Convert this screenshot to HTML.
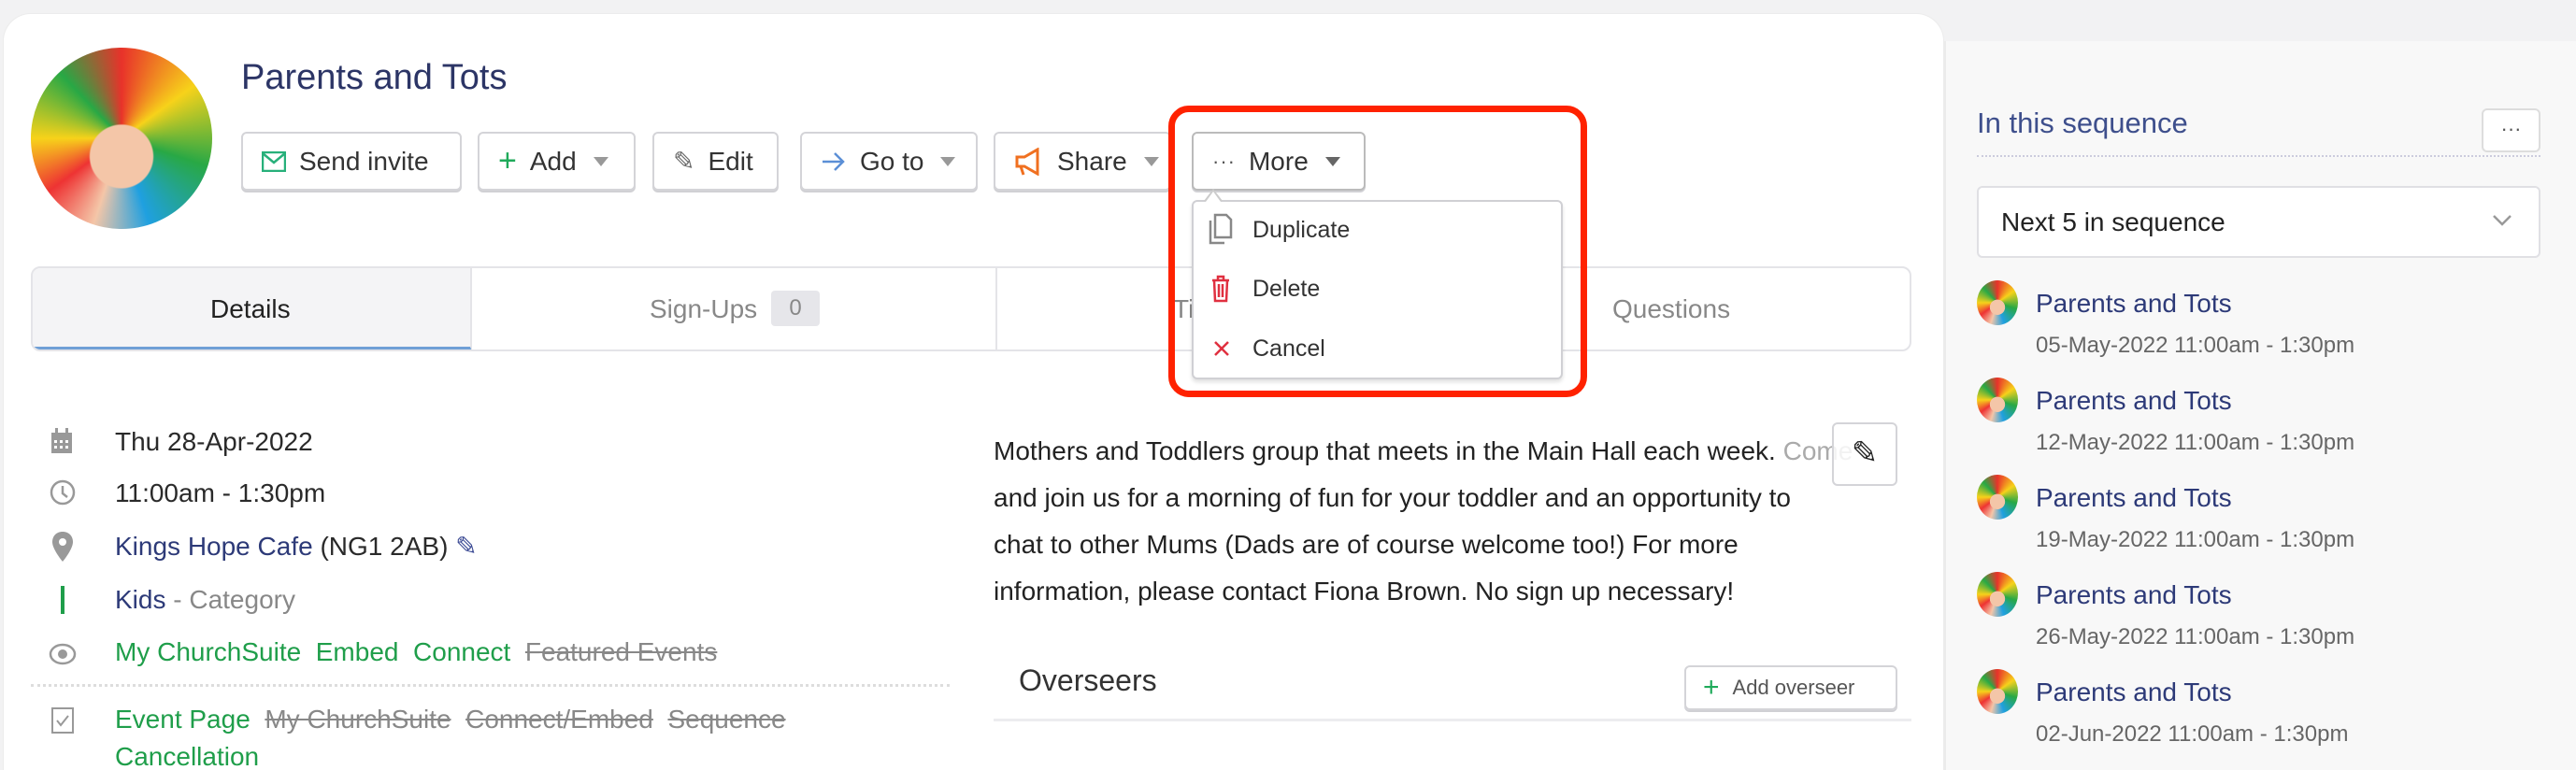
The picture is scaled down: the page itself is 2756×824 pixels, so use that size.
<!DOCTYPE html>
<html style="width:2756px;height:824px;overflow:hidden"><head><meta charset="utf-8"><style>
*{box-sizing:border-box;margin:0;padding:0}
body{width:2756px;height:824px;overflow:hidden;background:#f2f2f3;font-family:"Liberation Sans",sans-serif;color:#2a2a2a;position:relative}
.abs{position:absolute}
.card{left:3px;top:14px;width:2077px;height:810px;background:#fff;border-radius:30px 30px 0 0;border:1px solid #ececec;border-bottom:none}
.side{left:2080px;top:44px;width:676px;height:780px;background:#f8f8f8;border-left:2px solid #ebebeb}
.av{border-radius:50%;background:
radial-gradient(circle at 50% 60%,#f4c6a8 0 22%,transparent 23%),
conic-gradient(from 0deg,#e8322a,#f7d21a 15%,#28a845 30%,#1fa0e0 45%,#f4c6a8 55%,#e33 65%,#f7d21a 75%,#28a845 88%,#e8322a)}
.btn{top:141px;height:63px;border:2px solid #d4d4d8;border-radius:6px;background:#fff;font-size:28px;color:#333;display:flex;align-items:center;padding-left:20px;gap:14px;box-shadow:0 2px 0 #d0d0d4}
.caret{width:0;height:0;border-left:8px solid transparent;border-right:8px solid transparent;border-top:10px solid #999;margin-left:4px}
.t28{font-size:28px}
.gray{color:#888}
.green{color:#1f9e4a}
.strike{color:#888;text-decoration:line-through}
.navy{color:#2d3a78}
.mi{font-size:25px;color:#333;left:1340px}
</style></head><body>
<div class="abs card"></div>
<div class="abs side"></div>

<div class="abs av" style="left:33px;top:51px;width:194px;height:194px"></div>
<div class="abs" style="left:258px;top:62px;font-size:38px;color:#2c3566">Parents and Tots</div>

<div class="abs btn" style="left:258px;width:236px"><svg width="26" height="22" viewBox="0 0 26 22"><rect x="1" y="1" width="24" height="20" fill="none" stroke="#27b07a" stroke-width="2.5"/><path d="M1 2l12 10 12-10" fill="none" stroke="#27b07a" stroke-width="2.5"/></svg>Send invite</div>
<div class="abs btn" style="left:511px;width:169px"><span style="color:#1faa5a;font-size:34px">+</span>Add<span class="caret"></span></div>
<div class="abs btn" style="left:698px;width:135px"><span style="color:#666;font-size:28px">✎</span>Edit</div>
<div class="abs btn" style="left:856px;width:190px"><svg width="28" height="24" viewBox="0 0 28 24"><path d="M2 12h22 M15 3l9 9-9 9" fill="none" stroke="#5b8fd6" stroke-width="2.5"/></svg>Go to<span class="caret"></span></div>
<div class="abs btn" style="left:1063px;width:190px"><svg width="32" height="30" viewBox="0 0 32 30"><path d="M3 10h8l14-8v26l-14-8H3z M7 20l3 9" fill="none" stroke="#f07020" stroke-width="3"/></svg>Share<span class="caret"></span></div>
<div class="abs btn" style="left:1275px;width:186px;border-color:#bbb"><span style="color:#555;font-size:22px;letter-spacing:1px">···</span>More<span class="caret" style="border-top-color:#666"></span></div>

<!-- tabs -->
<div class="abs" style="left:33px;top:285px;width:2012px;height:91px;border:2px solid #e4e4e8;border-radius:10px;overflow:hidden;background:#fff">
 <div class="abs" style="left:0;top:0;width:470px;height:89px;background:#f4f4f6;border-bottom:5px solid #6f9fd6;border-right:2px solid #e4e4e8"></div>
 <div class="abs" style="left:1030px;top:0;width:2px;height:89px;background:#e4e4e8"></div>
 <div class="abs t28" style="left:190px;top:28px;color:#222">Details</div>
 <div class="abs t28" style="left:660px;top:28px;color:#888">Sign-Ups</div>
 <div class="abs" style="left:790px;top:24px;width:52px;height:38px;background:#e6e6ea;border-radius:4px;font-size:24px;color:#888;text-align:center;line-height:38px">0</div>
 <div class="abs t28" style="left:1220px;top:28px;color:#888">Timeline</div>
 <div class="abs t28" style="left:1690px;top:28px;color:#888">Questions</div>
</div>

<!-- dropdown -->
<div class="abs" style="left:1250px;top:113px;width:448px;height:312px;border:7px solid #ff2200;border-radius:22px"></div>
<div class="abs" style="left:1275px;top:214px;width:397px;height:192px;background:#fff;border:2px solid #d0d0d4;border-radius:6px;box-shadow:0 3px 4px rgba(0,0,0,.12)"></div>
<div class="abs" style="left:1288px;top:202px;width:0;height:0;border-left:10px solid transparent;border-right:10px solid transparent;border-bottom:13px solid #ccc"></div>
<div class="abs" style="left:1290px;top:205px;width:0;height:0;border-left:8px solid transparent;border-right:8px solid transparent;border-bottom:11px solid #fff"></div>
<svg class="abs" style="left:1293px;top:228px" width="26" height="34" viewBox="0 0 26 34"><path d="M7 2h12l5 5v19H7z M2 8v24h15" fill="none" stroke="#888" stroke-width="2.5"/></svg>
<div class="abs mi" style="top:232px">Duplicate</div>
<svg class="abs" style="left:1295px;top:294px" width="22" height="30" viewBox="0 0 22 30"><path d="M2 6h18 M8 6V2h6v4 M4 6l1 22h12l1-22 M9 10v14 M13 10v14" fill="none" stroke="#e03040" stroke-width="2.5"/></svg>
<div class="abs mi" style="top:295px">Delete</div>
<svg class="abs" style="left:1298px;top:364px" width="18" height="18" viewBox="0 0 18 18"><path d="M2 2l14 14 M16 2L2 16" stroke="#e03040" stroke-width="2.5"/></svg>
<div class="abs mi" style="top:359px">Cancel</div>

<!-- details -->
<svg class="abs" style="left:54px;top:458px" width="24" height="28" viewBox="0 0 24 28"><rect x="1" y="5" width="22" height="22" fill="#999"/><rect x="5" y="0" width="3" height="6" fill="#999"/><rect x="16" y="0" width="3" height="6" fill="#999"/><g fill="#fff"><rect x="4" y="13" width="3" height="3"/><rect x="10" y="13" width="3" height="3"/><rect x="16" y="13" width="3" height="3"/><rect x="4" y="19" width="3" height="3"/><rect x="10" y="19" width="3" height="3"/><rect x="16" y="19" width="3" height="3"/></g></svg>
<div class="abs t28" style="left:123px;top:457px">Thu 28-Apr-2022</div>
<svg class="abs" style="left:53px;top:513px" width="28" height="28" viewBox="0 0 28 28"><circle cx="14" cy="14" r="12" fill="none" stroke="#999" stroke-width="2.5"/><path d="M14 7v8l5 4" fill="none" stroke="#999" stroke-width="2.5"/></svg>
<div class="abs t28" style="left:123px;top:512px">11:00am - 1:30pm</div>
<svg class="abs" style="left:55px;top:568px" width="24" height="34" viewBox="0 0 24 34"><path d="M12 1C5 1 1 6 1 12c0 8 11 21 11 21s11-13 11-21C23 6 19 1 12 1z" fill="#999"/><circle cx="12" cy="12" r="4" fill="#fff"/></svg>
<div class="abs t28" style="left:123px;top:568px"><span class="navy">Kings Hope Cafe</span> (NG1 2AB) <span style="color:#3b4a94">✎</span></div>
<div class="abs" style="left:65px;top:627px;width:4px;height:30px;background:#1f9e4a"></div>
<div class="abs t28" style="left:123px;top:626px"><span class="navy">Kids</span><span class="gray"> - Category</span></div>
<svg class="abs" style="left:52px;top:688px" width="30" height="24" viewBox="0 0 30 24"><ellipse cx="15" cy="12" rx="13" ry="10" fill="none" stroke="#999" stroke-width="2.5"/><circle cx="15" cy="12" r="5" fill="#999"/></svg>
<div class="abs t28" style="left:123px;top:682px"><span class="green">My ChurchSuite</span>&nbsp;&nbsp;<span class="green">Embed</span>&nbsp;&nbsp;<span class="green">Connect</span>&nbsp;&nbsp;<span class="strike">Featured Events</span></div>
<div class="abs" style="left:33px;top:732px;width:983px;border-top:3px dotted #ddd"></div>
<svg class="abs" style="left:55px;top:757px" width="24" height="28" viewBox="0 0 24 28"><rect x="1" y="1" width="22" height="26" fill="none" stroke="#999" stroke-width="2"/><path d="M6 14l4 5 8-10" fill="none" stroke="#999" stroke-width="2"/></svg>
<div class="abs t28" style="left:123px;top:754px"><span class="green">Event Page</span>&nbsp;&nbsp;<span class="strike">My ChurchSuite</span>&nbsp;&nbsp;<span class="strike">Connect/Embed</span>&nbsp;&nbsp;<span class="strike">Sequence</span></div>
<div class="abs t28 green" style="left:123px;top:794px">Cancellation</div>

<!-- description -->
<div class="abs t28" style="left:1063px;top:458px;width:960px;line-height:50px;color:#222">Mothers and Toddlers group that meets in the Main Hall each week. <span style="color:#aaa">Come</span><br>and join us for a morning of fun for your toddler and an opportunity to<br>chat to other Mums (Dads are of course welcome too!) For more<br>information, please contact Fiona Brown. No sign up necessary!</div>
<div class="abs" style="left:1960px;top:452px;width:70px;height:68px;background:rgba(255,255,255,.85);border:2px solid #d4d4d8;border-radius:6px;font-size:34px;text-align:center;line-height:62px;color:#222">✎</div>
<div class="abs" style="left:1090px;top:710px;font-size:32px;color:#333">Overseers</div>
<div class="abs" style="left:1802px;top:712px;width:228px;height:48px;border:2px solid #d4d4d8;border-radius:6px;box-shadow:0 2px 0 #d0d0d4;font-size:22px;color:#555;display:flex;align-items:center;padding-left:18px;gap:14px"><span style="color:#1faa5a;font-size:30px">+</span>Add overseer</div>
<div class="abs" style="left:1063px;top:769px;width:982px;height:3px;background:#ececef"></div>

<!-- sidebar -->
<div class="abs" style="left:2115px;top:114px;font-size:31px;color:#3e4f8c">In this sequence</div>
<div class="abs" style="left:2655px;top:116px;width:63px;height:47px;background:#fff;border:2px solid #ddd;border-radius:6px;text-align:center;font-size:22px;color:#555;line-height:40px">···</div>
<div class="abs" style="left:2115px;top:166px;width:603px;border-top:2px dotted #ccd"></div>
<div class="abs" style="left:2115px;top:199px;width:603px;height:77px;background:#fff;border:2px solid #e0e0e4;border-radius:6px"></div>
<div class="abs" style="left:2141px;top:222px;font-size:28px;color:#222">Next 5 in sequence</div>
<svg class="abs" style="left:2666px;top:229px" width="22" height="14" viewBox="0 0 22 14"><path d="M2 2l9 9 9-9" fill="none" stroke="#999" stroke-width="2.5"/></svg>

<div class="abs av" style="left:2115px;top:300px;width:44px;height:48px"></div>
<div class="abs" style="left:2178px;top:309px;font-size:28px;color:#2d3a78">Parents and Tots</div>
<div class="abs" style="left:2178px;top:356px;font-size:24px;color:#666">05-May-2022 11:00am - 1:30pm</div>
<div class="abs av" style="left:2115px;top:404px;width:44px;height:48px"></div>
<div class="abs" style="left:2178px;top:413px;font-size:28px;color:#2d3a78">Parents and Tots</div>
<div class="abs" style="left:2178px;top:460px;font-size:24px;color:#666">12-May-2022 11:00am - 1:30pm</div>
<div class="abs av" style="left:2115px;top:508px;width:44px;height:48px"></div>
<div class="abs" style="left:2178px;top:517px;font-size:28px;color:#2d3a78">Parents and Tots</div>
<div class="abs" style="left:2178px;top:564px;font-size:24px;color:#666">19-May-2022 11:00am - 1:30pm</div>
<div class="abs av" style="left:2115px;top:612px;width:44px;height:48px"></div>
<div class="abs" style="left:2178px;top:621px;font-size:28px;color:#2d3a78">Parents and Tots</div>
<div class="abs" style="left:2178px;top:668px;font-size:24px;color:#666">26-May-2022 11:00am - 1:30pm</div>
<div class="abs av" style="left:2115px;top:716px;width:44px;height:48px"></div>
<div class="abs" style="left:2178px;top:725px;font-size:28px;color:#2d3a78">Parents and Tots</div>
<div class="abs" style="left:2178px;top:772px;font-size:24px;color:#666">02-Jun-2022 11:00am - 1:30pm</div>
</body></html>
